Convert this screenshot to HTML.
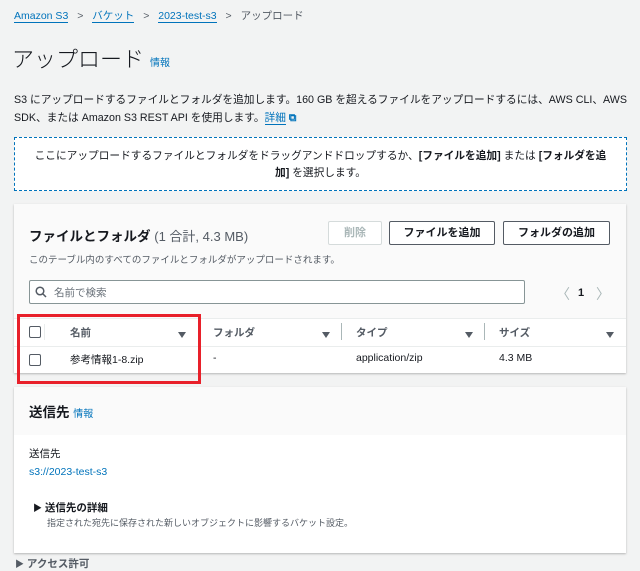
<!DOCTYPE html>
<html><head><meta charset="utf-8"><style>
*{margin:0;padding:0;box-sizing:border-box}
body{width:640px;height:570px;background:#f2f3f3;font-family:"Liberation Sans","Noto Sans CJK JP",sans-serif;color:#16191f;position:relative;overflow:hidden;font-size:11px}
.a{position:absolute;white-space:nowrap}
.lnk{color:#0073bb}
.ul{border-bottom:1px solid #0073bb}
.btn{position:absolute;height:24px;border:1px solid #545b64;background:#fff;font-size:11px;font-weight:bold;color:#16191f;text-align:center;line-height:22px;border-radius:2px}
.tri{display:inline-block;width:0;height:0;border-left:4px solid transparent;border-right:4px solid transparent;border-top:6px solid #545b64}
.cb{position:absolute;width:12px;height:12px;border:1px solid #545b64;background:#fff;border-radius:2px}
</style></head><body>
<div class="a" style="left:14px;top:8px;font-size:10.5px"><span class="lnk ul">Amazon S3</span> <span style="color:#545b64;margin:0 6px">&gt;</span> <span class="lnk ul">バケット</span> <span style="color:#545b64;margin:0 6px">&gt;</span> <span class="lnk ul">2023-test-s3</span> <span style="color:#545b64;margin:0 6px">&gt;</span> <span style="color:#545b64">アップロード</span></div>
<div class="a" style="left:12px;top:42px;font-size:22px;font-weight:300;color:#16191f">アップロード</div>
<div class="a lnk" style="left:150px;top:54px;font-size:10px">情報</div>
<div class="a" style="left:14px;top:91px;font-size:10.7px;line-height:18px;color:#16191f">S3 にアップロードするファイルとフォルダを追加します。160 GB を超えるファイルをアップロードするには、AWS CLI、AWS<br>SDK、または Amazon S3 REST API を使用します。<span class="lnk ul">詳細</span> <span class="lnk" style="font-weight:bold">⧉</span></div>
<div class="a" style="left:14px;top:137px;width:613px;height:54px;border:1px dashed #0073bb;background:#fff;text-align:center;font-size:10.7px;line-height:17px;padding-top:10px;white-space:normal;color:#16191f">ここにアップロードするファイルとフォルダをドラッグアンドドロップするか、<b>[ファイルを追加]</b> または <b>[フォルダを追<br>加]</b> を選択します。</div>

<div class="a" style="left:14px;top:204px;width:612px;height:169px;background:#fafafa;box-shadow:0 1px 2px rgba(0,0,0,.25)"></div>
<div class="a" style="left:29px;top:225px;font-size:13.5px;font-weight:bold">ファイルとフォルダ <span style="font-weight:normal;color:#545b64;font-size:13px">(1 合計, 4.3 MB)</span></div>
<div class="btn" style="left:328px;top:221px;width:54px;border-color:#d5dbdb;color:#aab7b8">削除</div>
<div class="btn" style="left:389px;top:221px;width:106px">ファイルを追加</div>
<div class="btn" style="left:503px;top:221px;width:107px">フォルダの追加</div>
<div class="a" style="left:29px;top:252px;font-size:9.5px;color:#545b64">このテーブル内のすべてのファイルとフォルダがアップロードされます。</div>
<div class="a" style="left:29px;top:280px;width:496px;height:24px;border:1px solid #879596;background:#fff;border-radius:2px"></div>
<svg class="a" style="left:35px;top:286px" width="12" height="12" viewBox="0 0 12 12"><circle cx="5" cy="5" r="3.8" fill="none" stroke="#545b64" stroke-width="1.5"/><path d="M8 8l3 3" stroke="#545b64" stroke-width="1.5"/></svg>
<div class="a" style="left:54px;top:285px;font-size:10.5px;color:#687078">名前で検索</div>
<div class="a" style="left:556px;top:284px;font-size:14px;color:#aab7b8">〈</div>
<div class="a" style="left:578px;top:287px;font-size:11px;font-weight:bold">1</div>
<div class="a" style="left:596px;top:284px;font-size:14px;color:#aab7b8">〉</div>
<div class="a" style="left:14px;top:318px;width:612px;height:55px;background:#fff;border-top:1px solid #eaeded"></div>
<div class="a" style="left:14px;top:346px;width:612px;height:1px;background:#eaeded"></div>
<div class="cb" style="left:29px;top:326px"></div>
<div class="a" style="left:44px;top:324px;width:1px;height:16px;background:#eaeded"></div>
<div class="a" style="left:70px;top:325px;font-size:10.5px;font-weight:bold;color:#545b64">名前</div><div class="a" style="left:178px;top:329px"><span class="tri"></span></div>
<div class="a" style="left:213px;top:325px;font-size:10.5px;font-weight:bold;color:#545b64">フォルダ</div><div class="a" style="left:322px;top:329px"><span class="tri"></span></div>
<div class="a" style="left:341px;top:323px;width:1px;height:17px;background:#aab7b8"></div>
<div class="a" style="left:356px;top:325px;font-size:10.5px;font-weight:bold;color:#545b64">タイプ</div><div class="a" style="left:465px;top:329px"><span class="tri"></span></div>
<div class="a" style="left:484px;top:323px;width:1px;height:17px;background:#aab7b8"></div>
<div class="a" style="left:499px;top:325px;font-size:10.5px;font-weight:bold;color:#545b64">サイズ</div><div class="a" style="left:606px;top:329px"><span class="tri"></span></div>
<div class="cb" style="left:29px;top:354px"></div>
<div class="a" style="left:70px;top:352px;font-size:10.5px">参考情報1-8.zip</div>
<div class="a" style="left:213px;top:352px;font-size:10.5px">-</div>
<div class="a" style="left:356px;top:352px;font-size:10.5px">application/zip</div>
<div class="a" style="left:499px;top:352px;font-size:10.5px">4.3 MB</div>
<div class="a" style="left:17px;top:314px;width:184px;height:70px;border:3px solid #e8202a"></div>

<div class="a" style="left:14px;top:387px;width:612px;height:166px;background:#fff;box-shadow:0 1px 2px rgba(0,0,0,.25)"></div>
<div class="a" style="left:14px;top:387px;width:612px;height:48px;background:#fafafa"></div>
<div class="a" style="left:29px;top:401px;font-size:13.5px;font-weight:bold">送信先 <span class="lnk" style="font-size:10px;font-weight:normal">情報</span></div>
<div class="a" style="left:29px;top:446px;font-size:10.5px">送信先</div>
<div class="a lnk" style="left:29px;top:466px;font-size:10.5px">s3://2023-test-s3</div>
<div class="a" style="left:33px;top:500px;font-size:10.5px;font-weight:bold"><span style="font-size:9px;color:#16191f">▶</span> 送信先の詳細</div>
<div class="a" style="left:47px;top:516px;font-size:9px;color:#545b64">指定された宛先に保存された新しいオブジェクトに影響するバケット設定。</div>
<div class="a" style="left:15px;top:556px;font-size:10.5px;font-weight:bold;color:#545b64"><span style="font-size:9px">▶</span> アクセス許可</div>
</body></html>
